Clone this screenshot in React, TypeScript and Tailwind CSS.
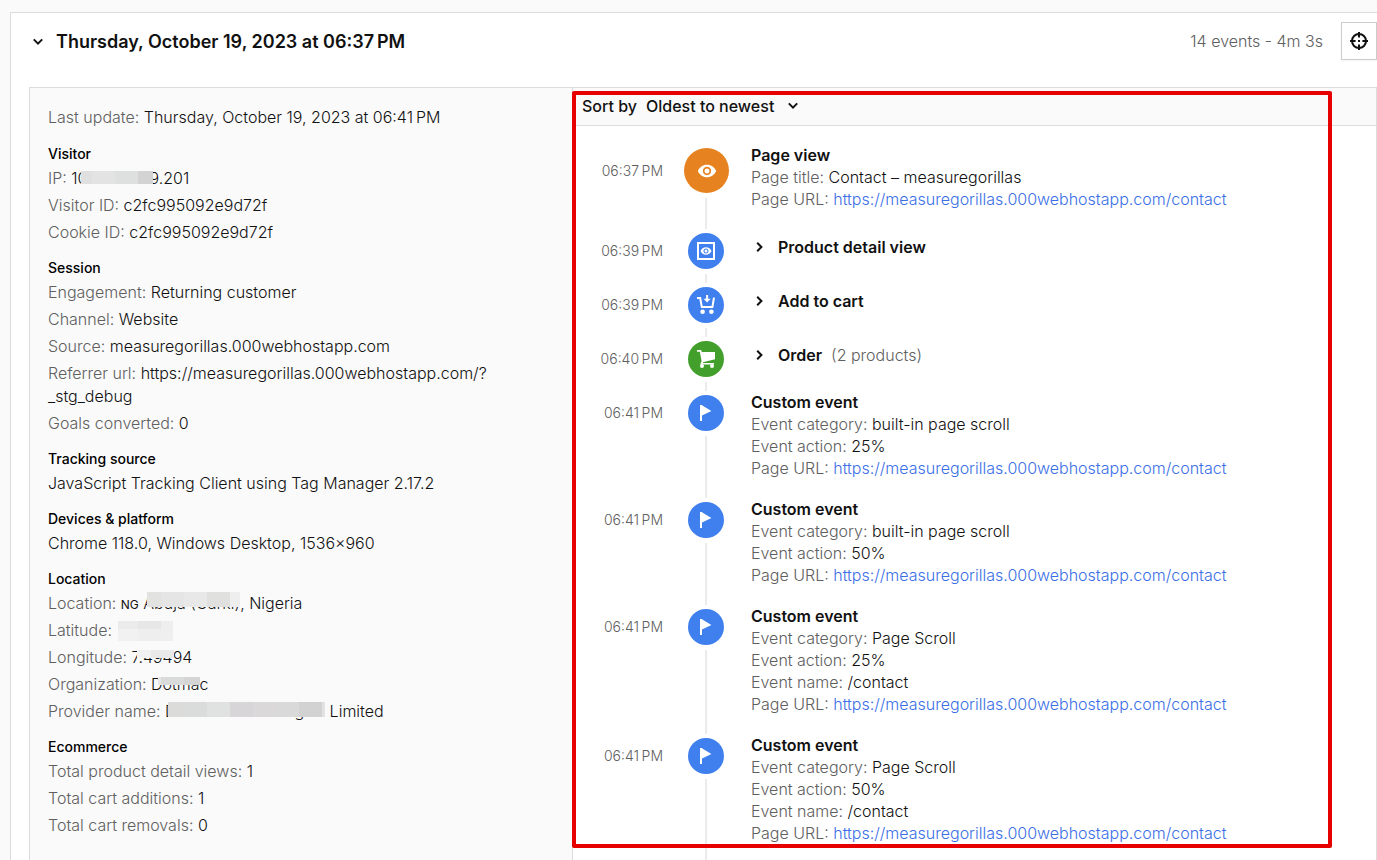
import React from "react";

type Seg = { w: number; c: string };

function Mosaic({ segs, className }: { segs: Seg[]; className: string }) {
  return (
    <span aria-hidden="true" className={`absolute flex ${className}`}>
      {segs.map((s, i) => (
        <span key={i} className="h-full" style={{ width: s.w, backgroundColor: s.c }} />
      ))}
    </span>
  );
}

function Chevron({ dir }: { dir: "down" | "right" }) {
  return (
    <svg width="12" height="12" viewBox="0 0 12 12" fill="none" stroke="#111" strokeWidth="2" className="shrink-0" aria-hidden="true">
      <path d={dir === "down" ? "M1.8 3.4L6 7.6l4.2-4.2" : "M4.2 1.8L8.4 6l-4.2 4.2"} />
    </svg>
  );
}

function Row({ label, children }: { label?: string; children?: React.ReactNode }) {
  return (
    <p className="text-base leading-[23px] text-[#111]">
      {label && <span className="text-[#606060]">{label}: </span>}
      {children}
    </p>
  );
}

function Section({ title, children }: { title: string; children: React.ReactNode }) {
  return (
    <section className="mt-[13px]">
      <h3 className="mb-[3px] text-sm leading-[21px] font-medium text-black">{title}</h3>
      <div className="flex flex-col gap-1">{children}</div>
    </section>
  );
}

const EYE = "M12 4.5C7 4.5 2.73 7.61 1 12c1.73 4.39 6 7.5 11 7.5s9.27-3.11 11-7.5c-1.73-4.39-6-7.5-11-7.5zM12 17c-2.76 0-5-2.24-5-5s2.24-5 5-5 5 2.24 5 5-2.24 5-5 5zm0-8c-1.66 0-3 1.34-3 3s1.34 3 3 3 3-1.34 3-3-1.34-3-3-3z";

function EventIcon({ kind }: { kind: string }) {
  if (kind === "view")
    return (
      <svg width="20" height="20" viewBox="0 0 24 24" fill="#fff" aria-hidden="true">
        <path d={EYE} />
      </svg>
    );
  if (kind === "detail")
    return (
      <svg width="20" height="20" viewBox="0 0 20 20" aria-hidden="true">
        <rect x="2" y="2" width="16" height="16" fill="none" stroke="#fff" strokeWidth="2" />
        <path d={EYE} fill="#fff" transform="translate(4 4) scale(.5)" />
      </svg>
    );
  if (kind === "add")
    return (
      <svg width="20" height="20" viewBox="0 0 20 20" aria-hidden="true">
        <path d="M1 3h3.2l1.6 9h10.6L18 2.6" fill="none" stroke="#fff" strokeWidth="2" />
        <path d="M10.1 0h2v3.8h2.5l-3.5 3.8-3.5-3.8h2.5z" fill="#fff" />
        <circle cx="6.6" cy="16.8" r="2.3" fill="#fff" />
        <circle cx="15.4" cy="16.8" r="2.3" fill="#fff" />
      </svg>
    );
  if (kind === "order")
    return (
      <svg width="20" height="20" viewBox="0 0 20 20" fill="#fff" aria-hidden="true">
        <path d="M1 1h4.2l.5 2H19v7.2L7 13.2l-.2.8H18v1.6H4.2L5.6 12 3.8 2.8H1z" />
        <circle cx="6" cy="17" r="2" />
        <circle cx="16" cy="17" r="2" />
      </svg>
    );
  return (
    <svg width="20" height="20" viewBox="0 0 20 20" fill="#fff" aria-hidden="true">
      <path d="M4 2h2l.3.6L15.4 8 6 12.6V18H4z" />
    </svg>
  );
}

type Ev = {
  time: string;
  kind: string;
  title: string;
  note?: string;
  rows?: [string, string][];
  url?: boolean;
};

const events: Ev[] = [
  { time: "06:37\u202fPM", kind: "view", title: "Page view", rows: [["Page title", "Contact – measuregorillas"]], url: true },
  { time: "06:39\u202fPM", kind: "detail", title: "Product detail view" },
  { time: "06:39\u202fPM", kind: "add", title: "Add to cart" },
  { time: "06:40\u202fPM", kind: "order", title: "Order", note: "(2 products)" },
  { time: "06:41\u202fPM", kind: "custom", title: "Custom event", rows: [["Event category", "built-in page scroll"], ["Event action", "25%"]], url: true },
  { time: "06:41\u202fPM", kind: "custom", title: "Custom event", rows: [["Event category", "built-in page scroll"], ["Event action", "50%"]], url: true },
  { time: "06:41\u202fPM", kind: "custom", title: "Custom event", rows: [["Event category", "Page Scroll"], ["Event action", "25%"], ["Event name", "/contact"]], url: true },
  { time: "06:41\u202fPM", kind: "custom", title: "Custom event", rows: [["Event category", "Page Scroll"], ["Event action", "50%"], ["Event name", "/contact"]], url: true },
];

const circleColor: Record<string, string> = {
  view: "size-[45px] self-start bg-[#e6821f]",
  detail: "size-9 bg-[#4080ee]",
  add: "size-9 bg-[#4080ee]",
  order: "size-9 bg-[#439f2b]",
  custom: "size-9 bg-[#4080ee]",
};

function TimelineItem({ ev }: { ev: Ev }) {
  const big = ev.kind === "view";
  return (
    <li className="flex">
      <time className={`mt-1 flex w-[90px] shrink-0 items-center justify-end text-sm text-[#606060] ${big ? "h-[45px]" : "h-9"}`}>
        {ev.time}
      </time>
      <div className="mr-[22px] ml-[21px] flex w-[45px] shrink-0 flex-col items-center pt-1 pr-px">
        <span className={`flex shrink-0 items-center justify-center rounded-full ${circleColor[ev.kind]}`}>
          <EventIcon kind={ev.kind} />
        </span>
        <span className="mt-[5px] w-0.5 grow bg-[#ebebeb]" />
      </div>
      {ev.rows ? (
        <div className="min-w-0 pb-[19px] text-base leading-[22px] text-[#111]">
          <h4 className="font-semibold">{ev.title}</h4>
          {ev.rows.map(([k, v]) => (
            <p key={k}>
              <span className="text-[#606060]">{k}: </span>
              {v}
            </p>
          ))}
          {ev.url && (
            <p>
              <span className="text-[#606060]">Page URL: </span>
              <a href="#contact" className="text-[#3b6fe6]">https://measuregorillas.000webhostapp.com/contact</a>
            </p>
          )}
        </div>
      ) : (
        <div className="h-[54px] pt-[7px]">
          <button type="button" className="flex h-[22px] items-center pl-0.5 text-base text-[#111]">
            <Chevron dir="right" />
            <span className="ml-[13px] font-semibold">{ev.title}</span>
            {ev.note && <span className="ml-[9px] text-[#606060]">{ev.note}</span>}
          </button>
        </div>
      )}
    </li>
  );
}

export default function App() {
  return (
    <div className="h-screen overflow-hidden bg-[#fafafa] pt-3 pl-2.5 font-['Inter',sans-serif] font-light">
      <div className="flex min-h-full flex-col border-t border-l border-[#dcdcdc] bg-white pl-[18px]">
        <header className="flex h-[74px] shrink-0 items-start justify-between pt-[9px]">
          <button type="button" className="flex h-10 items-center gap-3 pl-[3px]">
            <Chevron dir="down" />
            <span className="text-lg font-semibold text-[#111]">{"Thursday, October 19, 2023 at 06:37\u202fPM"}</span>
          </button>
          <div className="flex items-center gap-[18px]">
            <span className="text-base text-[#606060]">14 events - 4m 3s</span>
            <button type="button" aria-label="Locate session" className="flex h-[38px] w-9 items-center justify-center border border-[#ccc] bg-white shadow-xs">
              <svg width="20" height="20" viewBox="0 0 20 20" fill="none" stroke="#111" strokeWidth="2" aria-hidden="true">
                <circle cx="10" cy="10" r="7" />
                <path d="M10 1v5.6M10 13.4V19M1 10h5.6M13.4 10H19M9 10h2" />
              </svg>
            </button>
          </div>
        </header>
        <main className="relative flex grow border border-b-0 border-[#dcdcdc]">
          <aside className="w-[542px] shrink-0 bg-[#fafafa] pt-[18px] pr-[72px] pl-[18px]">
            <div className="pb-px">
              <Row label="Last update">{"Thursday, October 19, 2023 at 06:41\u202fPM"}</Row>
            </div>
            <Section title="Visitor">
              <Row label="IP">
                <span className="relative">
                  10<span className="inline-block w-[62px]" />9.201
                  <Mosaic className="top-[3px] left-[10px] h-[13px]" segs={[{ w: 11, c: "#e0e0e0" }, { w: 23, c: "#e4e3e3" }, { w: 23, c: "#dee0df" }, { w: 15, c: "#d3d3d3" }]} />
                </span>
              </Row>
              <Row label="Visitor ID">c2fc995092e9d72f</Row>
              <Row label="Cookie ID">c2fc995092e9d72f</Row>
            </Section>
            <Section title="Session">
              <Row label="Engagement">Returning customer</Row>
              <Row label="Channel">Website</Row>
              <Row label="Source">measuregorillas.000webhostapp.com</Row>
              <Row label="Referrer url">https://measuregorillas.000webhostapp.com/?<wbr />_stg_debug</Row>
              <Row label="Goals converted">0</Row>
            </Section>
            <Section title="Tracking source">
              <Row>JavaScript Tracking Client using Tag Manager 2.17.2</Row>
            </Section>
            <Section title="Devices & platform">
              <Row>Chrome 118.0, Windows Desktop, 1536×960</Row>
            </Section>
            <Section title="Location">
              <Row label="Location">
                <span className="text-xs font-normal">NG</span>{" "}
                <span className="relative">
                  Abuja (Garki),
                  <Mosaic className="-top-px left-1 h-[15px]" segs={[{ w: 14, c: "#e2e2e1" }, { w: 23, c: "#e5e5e5" }, { w: 23, c: "#e8e8e8" }, { w: 23, c: "#e0e0df" }, { w: 10, c: "#eeeeee" }]} />
                </span>{" "}
                Nigeria
              </Row>
              <Row label="Latitude">
                <span className="relative">
                  <span className="inline-block w-[55px]" />
                  <Mosaic className="top-px left-0.5 h-2" segs={[{ w: 20, c: "#ebebeb" }, { w: 23, c: "#e7e7e7" }, { w: 12, c: "#eeeeee" }]} />
                  <Mosaic className="top-[9px] left-0.5 h-3" segs={[{ w: 20, c: "#f1f1f1" }, { w: 23, c: "#eeeeee" }, { w: 12, c: "#efefef" }]} />
                </span>
              </Row>
              <Row label="Longitude">
                <span className="relative">
                  7.49494
                  <Mosaic className="top-[3px] left-[6px] h-2" segs={[{ w: 14, c: "#f1f1f1" }, { w: 23, c: "#e9e9e9" }]} />
                </span>
              </Row>
              <Row label="Organization">
                <span className="relative">
                  Dotmac
                  <Mosaic className="top-[3px] left-[7px] h-2" segs={[{ w: 3, c: "#e6e6e6" }, { w: 23, c: "#d9dbda" }, { w: 16, c: "#d5d5d6" }]} />
                </span>
              </Row>
              <Row label="Provider name">
                <span className="relative">
                  D<span className="inline-block w-[118px]" />g<span className="inline-block w-[21px]" />
                  <Mosaic className="top-px left-[3px] h-[15px]" segs={[{ w: 16, c: "#dbdbda" }, { w: 23, c: "#d9dcda" }, { w: 23, c: "#e0e2e1" }, { w: 23, c: "#d7d5d7" }, { w: 23, c: "#dbd8da" }, { w: 23, c: "#dad9d9" }, { w: 23, c: "#d3d2d2" }, { w: 3, c: "#e2e2e2" }]} />
                </span>{" "}
                Limited
              </Row>
            </Section>
            <Section title="Ecommerce">
              <Row label="Total product detail views">1</Row>
              <Row label="Total cart additions">1</Row>
              <Row label="Total cart removals">0</Row>
            </Section>
          </aside>
          <section className="min-w-0 grow border-l border-[#dcdcdc]">
            <div className="flex h-[38px] items-center border-b border-[#dcdcdc] bg-[#fafafa] pb-px pl-[9px] text-base font-medium text-[#111]">
              <span id="sort-label">Sort by</span>
              <button type="button" aria-labelledby="sort-label sort-value" className="ml-[9px] flex items-center gap-[13px]">
                <span id="sort-value">Oldest to newest</span>
                <Chevron dir="down" />
              </button>
            </div>
            <ol className="pt-[18px]">
              {events.map((ev, i) => (
                <TimelineItem key={i} ev={ev} />
              ))}
            </ol>
          </section>
          <div aria-hidden="true" className="pointer-events-none absolute top-[3px] right-11 left-[542px] h-[757px] rounded-xs border-4 border-[#e60000]" />
        </main>
      </div>
    </div>
  );
}
